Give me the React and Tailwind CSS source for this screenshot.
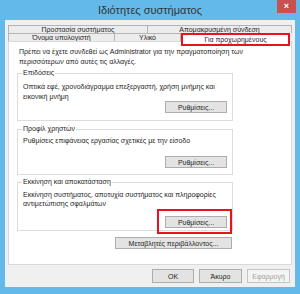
import React from "react";

const font = { fontFamily: '"Liberation Sans", Arial, sans-serif' };

function Button({ children, className = "", disabled }) {
  return (
    <div
      className={
        "flex items-center justify-center h-[12px] border text-[7px] leading-none " +
        (disabled
          ? "border-[#c4c4c4] bg-[#f4f4f4] text-[#a3a3a3] "
          : "border-[#adadad] bg-[#e3e3e3] text-[#1e1e1e] ") +
        className
      }
    >
      {children}
    </div>
  );
}

function Group({ title, height, children }) {
  return (
    <fieldset
      className="ml-[8px] w-[216px] border border-[#dcdcdc] px-[5px]"
      style={{ height }}
    >
      <legend className="ml-[-1px] px-[1px] text-[7px] leading-[10px] text-[#1e1e1e]">
        {title}
      </legend>
      {children}
    </fieldset>
  );
}

export default function App() {
  return (
    <div
      className="w-[300px] h-[294px] bg-[#63baea] flex flex-col overflow-hidden"
      style={font}
    >
      {/* title bar */}
      <div className="relative h-[20px] flex items-center justify-center">
        <span className="text-[11px] text-[#333333]">Ιδιότητες συστήματος</span>
        <div className="absolute top-0 right-[4px] w-[19px] h-[13px] bg-[#c75050] flex items-center justify-center text-white text-[9px] font-bold leading-none">
          ×
        </div>
      </div>

      {/* client area */}
      <div className="mx-[5px] h-[267px] bg-[#f0f0f0] px-[3px] pt-[5px] flex flex-col">
        {/* tabs row 1 */}
        <div className="flex h-[8px] text-[7px] leading-none text-[#1e1e1e]">
          <div className="w-[140px] border border-b-0 border-[#b4b4b4] bg-[#ececec] flex items-center justify-center">
            Προστασία συστήματος
          </div>
          <div className="flex-1 border border-b-0 border-l-0 border-[#b4b4b4] bg-[#ececec] flex items-center justify-center">
            Απομακρυσμένη σύνδεση
          </div>
        </div>
        {/* tabs row 2 */}
        <div className="flex h-[9px] text-[7px] leading-none text-[#1e1e1e]">
          <div className="w-[107px] border border-[#b4b4b4] bg-[#ececec] flex items-center justify-center">
            Όνομα υπολογιστή
          </div>
          <div className="w-[66px] border border-l-0 border-[#b4b4b4] bg-[#ececec] flex items-center justify-center">
            Υλικό
          </div>
          <div className="relative z-10 w-[109px] h-[13px] border-2 border-[#e8131c] bg-white flex items-center justify-center">
            Για προχωρημένους
          </div>
        </div>

        {/* panel */}
        <div className="h-[224px] -mt-[1px] border border-[#d9d9d9] bg-white text-[7px] text-[#1e1e1e]">
          <p className="pt-[5px] pl-[10px] leading-[10px]">
            Πρέπει να έχετε συνδεθεί ως Administrator για την πραγματοποίηση των
            <br />
            περισσότερων από αυτές τις αλλαγές.
          </p>

          <div className="mt-[1px]">
            <Group title="Επιδόσεις" height="53px">
              <p className="mt-[4px] leading-[10px]">
                Οπτικά εφέ, χρονοδιάγραμμα επεξεργαστή, χρήση μνήμης και
                <br />
                εικονική μνήμη
              </p>
              <div className="flex justify-end -mt-[1px]">
                <Button className="w-[62px]">Ρυθμίσεις...</Button>
              </div>
            </Group>
          </div>

          <div className="mt-[3px]">
            <Group title="Προφίλ χρηστών" height="51px">
              <p className="mt-[2px] leading-[10px]">
                Ρυθμίσεις επιφάνειας εργασίας σχετικές με την είσοδο
              </p>
              <div className="flex justify-end mt-[10px]">
                <Button className="w-[62px]">Ρυθμίσεις...</Button>
              </div>
            </Group>
          </div>

          <div className="mt-[2px]">
            <Group title="Εκκίνηση και αποκατάσταση" height="54px">
              <p className="mt-[3px] leading-[9px]">
                Εκκίνηση συστήματος, αποτυχία συστήματος και πληροφορίες
                <br />
                αντιμετώπισης σφαλμάτων
              </p>
              <div className="flex justify-end -mr-[5px] mt-[1px]">
                <div className="border-2 border-[#e8131c] pl-[6px] pr-[3px] pt-[5px] pb-[4px]">
                  <Button className="w-[62px] h-[11px]">Ρυθμίσεις...</Button>
                </div>
              </div>
            </Group>
          </div>

          <div className="ml-[8px] w-[216px] flex justify-end pr-[1px] mt-[6px]">
            <Button className="w-[117px]">Μεταβλητές περιβάλλοντος...</Button>
          </div>
        </div>

        {/* dialog buttons */}
        <div className="flex justify-end gap-[5px] pr-[2px] mt-[4px]">
          <Button className="w-[42px] h-[14px]">OK</Button>
          <Button className="w-[43px] h-[14px]">Άκυρο</Button>
          <Button className="w-[43px] h-[14px]" disabled>
            Εφαρμογή
          </Button>
        </div>
      </div>
    </div>
  );
}
